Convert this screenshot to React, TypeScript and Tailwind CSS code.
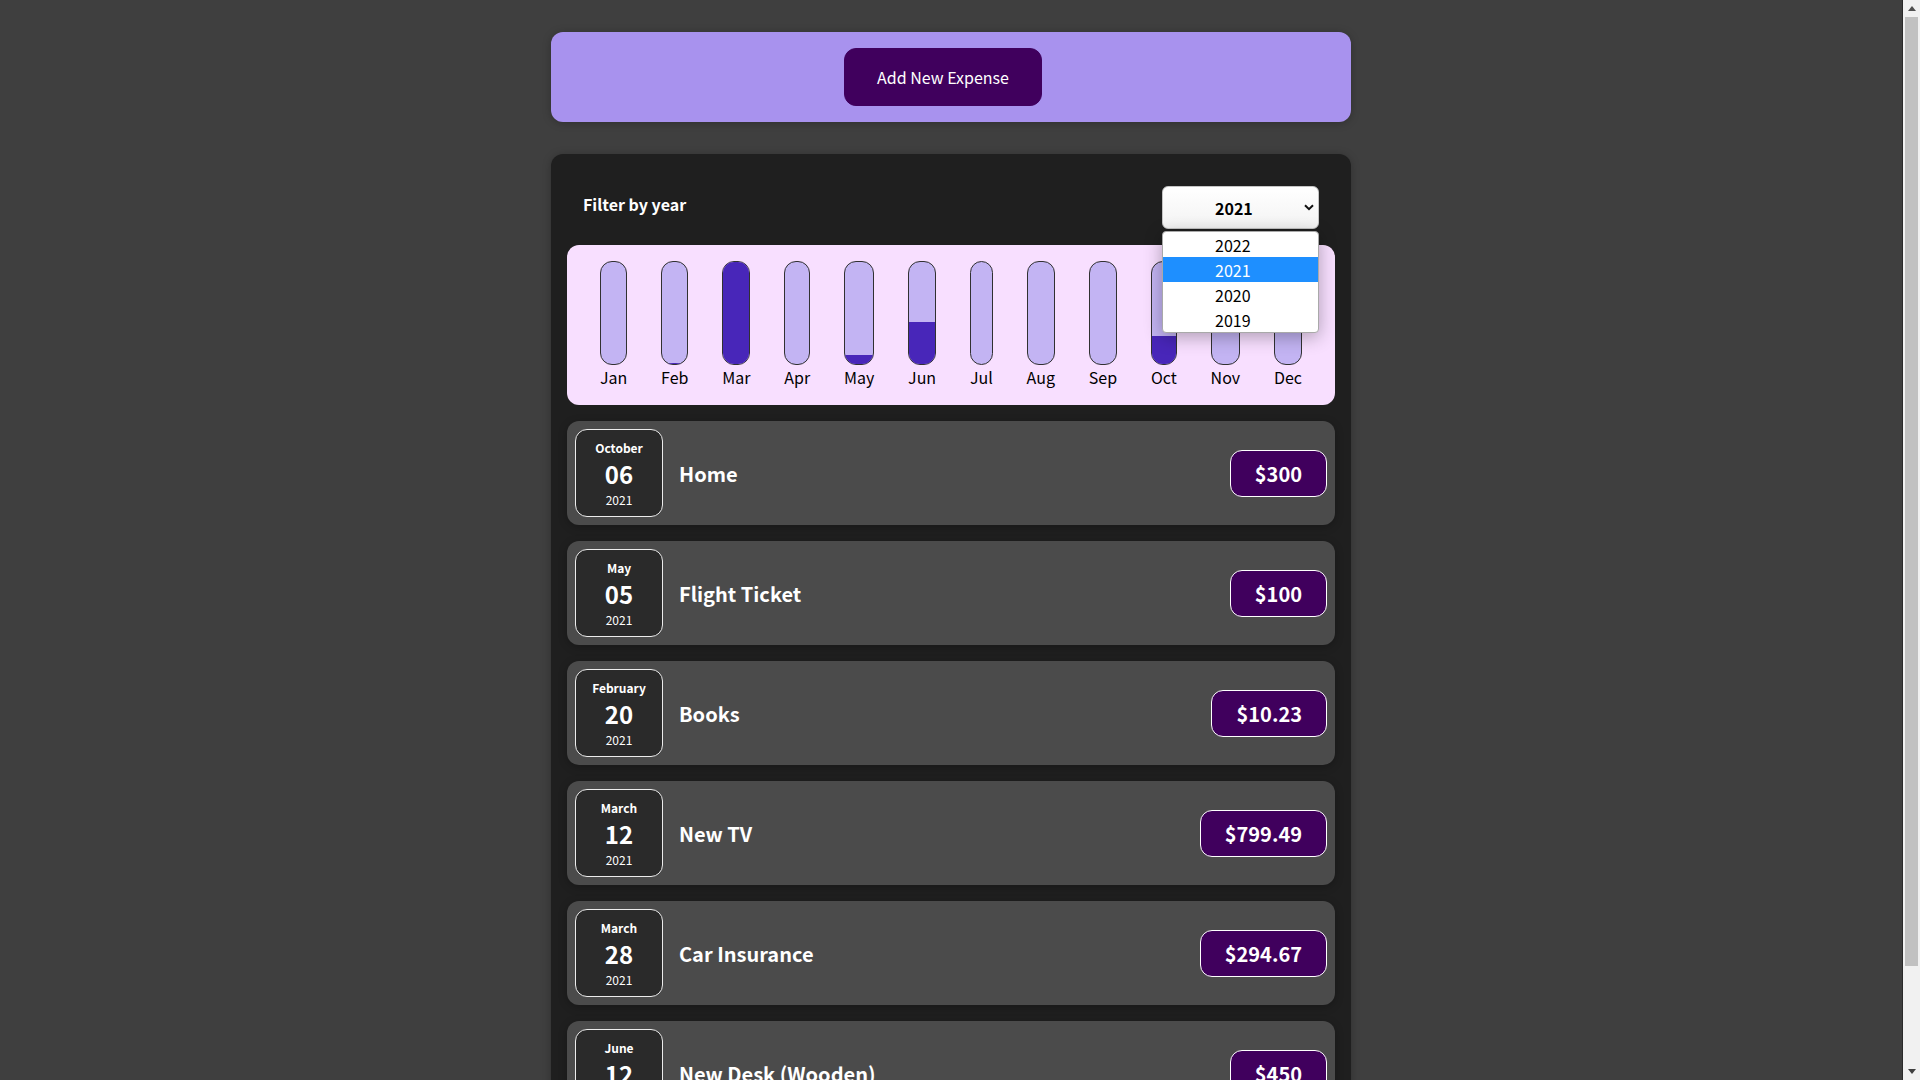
import React from 'react'

type Expense = {
  id: string
  title: string
  amount: number
  date: Date
}

const expenses: Expense[] = [
  { id: 'e1', title: 'Home', amount: 300, date: new Date(2021, 9, 6) },
  { id: 'e2', title: 'Flight Ticket', amount: 100, date: new Date(2021, 4, 5) },
  { id: 'e3', title: 'Books', amount: 10.23, date: new Date(2021, 1, 20) },
  { id: 'e4', title: 'New TV', amount: 799.49, date: new Date(2021, 2, 12) },
  { id: 'e5', title: 'Car Insurance', amount: 294.67, date: new Date(2021, 2, 28) },
  { id: 'e6', title: 'New Desk (Wooden)', amount: 450, date: new Date(2021, 5, 12) },
]

const monthLabels = ['Jan', 'Feb', 'Mar', 'Apr', 'May', 'Jun', 'Jul', 'Aug', 'Sep', 'Oct', 'Nov', 'Dec']

function ExpenseDate({ date }: { date: Date }) {
  const month = date.toLocaleString('en-US', { month: 'long' })
  const day = String(date.getDate()).padStart(2, '0')
  const year = date.getFullYear()

  return (
    <div className="flex h-[88px] w-[88px] shrink-0 flex-col items-center justify-center rounded-xl border border-[#ececec] bg-[#2a2a2a] text-white">
      <div className="text-[12px] font-bold">{month}</div>
      <div className="text-[24px] font-bold">{day}</div>
      <div className="text-[12px]">{year}</div>
    </div>
  )
}

function ExpenseItem({ expense }: { expense: Expense }) {
  return (
    <li className="my-4 flex items-center justify-between rounded-xl bg-[#4b4b4b] p-2 shadow-[0_2px_8px_rgba(0,0,0,0.25)]">
      <ExpenseDate date={expense.date} />
      <div className="flex flex-1 items-center">
        <h2 className="mx-4 flex-1 text-[20px] font-bold text-white">{expense.title}</h2>
        <div className="rounded-xl border border-white bg-[#40005d] px-6 py-2 text-[20px] font-bold text-white">
          ${expense.amount}
        </div>
      </div>
    </li>
  )
}

function Chart({ items }: { items: Expense[] }) {
  const values = monthLabels.map(() => 0)
  items.forEach((e) => {
    values[e.date.getMonth()] += e.amount
  })
  const max = Math.max(...values)

  return (
    <div className="flex h-40 justify-around rounded-xl bg-[#f8dfff] p-4 text-center">
      {monthLabels.map((label, i) => {
        const fill = max > 0 ? Math.round((values[i] / max) * 100) + '%' : '0%'
        return (
          <div key={label} className="flex h-full flex-col items-center">
            <div className="flex h-full w-full flex-col justify-end overflow-hidden rounded-xl border border-[#313131] bg-[#c3b4f3]">
              <div className="w-full bg-[#4826b9]" style={{ height: fill }} />
            </div>
            <div className="text-[16px] text-black">{label}</div>
          </div>
        )
      })}
    </div>
  )
}

function YearSelect() {
  const years = ['2022', '2021', '2020', '2019']

  return (
    <div className="relative">
      <div className="flex h-[43px] w-[157px] items-center rounded-md border border-[#c4c4c4] bg-gradient-to-b from-white to-[#f3f3f3] pl-[52px] font-bold text-black">
        2021
        <svg
          className="absolute right-[5px] top-[18px]"
          width="10"
          height="7"
          viewBox="0 0 10 7"
          fill="none"
        >
          <path d="M1 1.2l4 4 4-4" stroke="#111" strokeWidth="2" />
        </svg>
      </div>
      {/* open native option list */}
      <div className="absolute left-0 top-[45px] z-10 w-[157px] overflow-hidden rounded-[4px] border border-[#a9a9a9] bg-white shadow-[0_4px_18px_rgba(0,0,0,0.3)]">
        {years.map((y) => (
          <div
            key={y}
            className={
              y === '2021'
                ? 'flex h-[25px] items-center bg-[#1e8fff] pl-[52px] text-white'
                : 'flex h-[25px] items-center pl-[52px] text-black'
            }
          >
            {y}
          </div>
        ))}
      </div>
    </div>
  )
}

function Scrollbar() {
  return (
    <div className="flex h-screen w-[18px] shrink-0 flex-col border-l border-[#2a2a2a] bg-[#f1f1f1]">
      <div className="flex h-[17px] items-center justify-center">
        <svg width="8" height="5" viewBox="0 0 8 5">
          <path d="M4 0L8 5H0z" fill="#505050" />
        </svg>
      </div>
      <div className="flex-1 px-[2px]">
        <div className="h-[949px] bg-[#c1c1c1]" />
      </div>
      <div className="flex h-[17px] items-center justify-center">
        <svg width="8" height="5" viewBox="0 0 8 5">
          <path d="M0 0H8L4 5z" fill="#404040" />
        </svg>
      </div>
    </div>
  )
}

export default function App() {
  return (
    <div className="flex h-screen overflow-hidden bg-[#3f3f3f] font-['Noto_Sans_CJK_JP','Noto_Sans',sans-serif] text-[16px] leading-[normal]">
      <div className="h-screen flex-1 overflow-hidden">
        <div className="py-8">
          <div className="mx-auto w-[800px] rounded-xl bg-[#a892ee] p-4 text-center shadow-[0_1px_8px_rgba(0,0,0,0.25)]">
            <button className="mr-4 rounded-xl border border-[#40005d] bg-[#40005d] px-8 py-4 text-white">
              Add New Expense
            </button>
          </div>

          <div className="mx-auto mt-8 w-[800px] rounded-xl bg-[#1f1f1f] p-4 shadow-[0_1px_8px_rgba(0,0,0,0.25)]">
            <div className="px-4 text-white">
              <div className="my-4 flex w-full items-center justify-between">
                <label className="mb-2 font-bold">Filter by year</label>
                <YearSelect />
              </div>
            </div>

            <Chart items={expenses} />

            <ul>
              {expenses.map((e) => (
                <ExpenseItem key={e.id} expense={e} />
              ))}
            </ul>
          </div>
        </div>
      </div>
      <Scrollbar />
    </div>
  )
}
